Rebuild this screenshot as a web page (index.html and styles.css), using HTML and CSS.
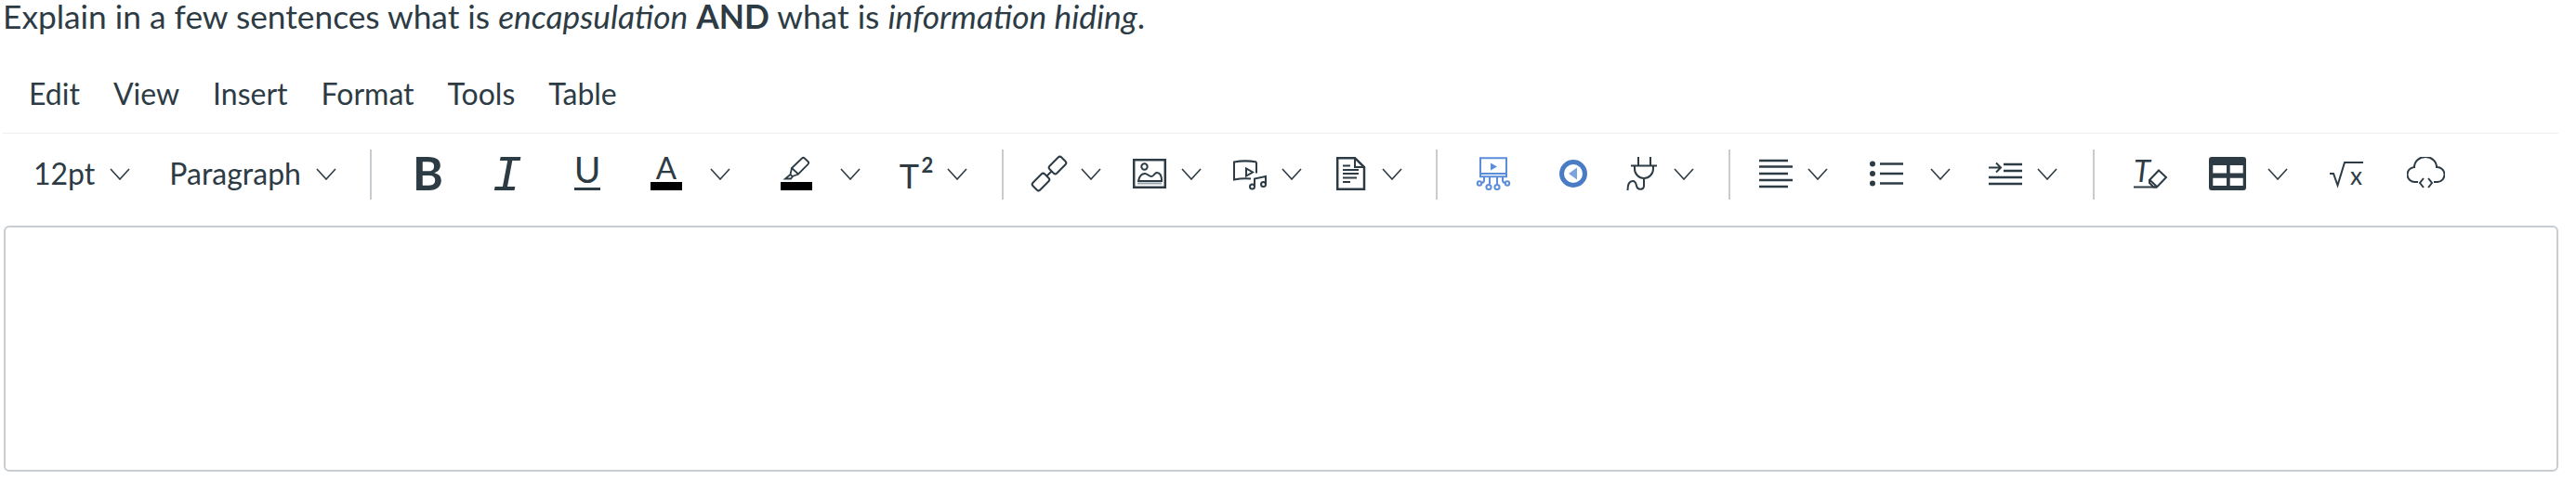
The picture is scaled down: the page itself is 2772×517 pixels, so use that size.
FILE: index.html
```html
<!DOCTYPE html>
<html lang="en">
<head>
<meta charset="utf-8">
<title>Essay question editor</title>
<link rel="stylesheet" href="styles.css">
</head>
<body>
<main class="page">
  <p class="question">Explain in a few sentences what is <em>encapsulation</em> <strong>AND</strong> what is <em>information hiding</em>.</p>

  <nav class="menubar">
    <span class="menu-item">Edit</span>
    <span class="menu-item">View</span>
    <span class="menu-item">Insert</span>
    <span class="menu-item">Format</span>
    <span class="menu-item">Tools</span>
    <span class="menu-item">Table</span>
  </nav>

  <div class="toolbar">
    <div class="group group-selects">
      <span class="select">12pt<svg class="chev" viewBox="0 0 22 13"><path d="M1 1l10 11L21 1"/></svg></span>
      <span class="select ml-42">Paragraph<svg class="chev" viewBox="0 0 22 13"><path d="M1 1l10 11L21 1"/></svg></span>
    </div>

    <div class="group pr-37">
      <svg class="icon ml-42" viewBox="0 0 36 36"><text class="g-bold" x="18.500" y="36">B</text></svg>
      <svg class="icon ml-50" viewBox="0 0 36 36"><text class="g-italic" x="17.500" y="36">I</text></svg>
      <svg class="icon ml-50" viewBox="0 0 36 36"><text class="g-under" x="18" y="28">U</text><rect class="solid" x="4" y="33" width="28" height="3"/></svg>
      <svg class="icon ml-49" viewBox="0 0 36 36"><text class="g-color" x="18" y="24">A</text><rect class="black" x="1" y="27" width="34" height="9"/></svg>
      <svg class="chev ml-29" viewBox="0 0 22 13"><path d="M1 1l10 11L21 1"/></svg>
      <svg class="icon ml-53" viewBox="0 0 36 36"><path class="thin" d="M24 1.500a2 2 0 0 1 2.800 0l3.700 3.500a2 2 0 0 1 0 2.800L20 18.500l-7-6.500zM13 12l-1.500 7 2 2 7-2.500M11.500 19L6 23.500h6l2-2.500"/><rect class="black" x="1" y="27" width="34" height="9"/></svg>
      <svg class="chev ml-29" viewBox="0 0 22 13"><path d="M1 1l10 11L21 1"/></svg>
      <svg class="icon ml-41" viewBox="0 0 36 36"><text class="g-sup" x="11.500" y="34">T</text><text class="g-two" x="31" y="17">2</text></svg>
      <svg class="chev ml-16" viewBox="0 0 22 13"><path d="M1 1l10 11L21 1"/></svg>
    </div>

    <div class="group">
      <svg class="icon ml-31" viewBox="0 0 36 36"><rect class="line" x="-9" y="-5.500" width="18" height="11" rx="2.500" transform="translate(27 9) rotate(-45)"/><rect class="line" x="-9" y="-5.500" width="18" height="11" rx="2.500" transform="translate(9 27) rotate(-45)"/><path class="line" d="M15 21l6-6"/></svg>
      <svg class="chev ml-16" viewBox="0 0 22 13"><path d="M1 1l10 11L21 1"/></svg>
      <svg class="icon ml-34" viewBox="0 0 36 36"><rect class="heavy" x="1.200" y="3.200" width="33.600" height="29.600"/><circle class="line" cx="12.500" cy="10.500" r="3.200"/><path class="line" d="M6 26c1-5 3-8 7-8 3 0 4 3 7 3s3-4 6-4c4 0 5 5 5 9z"/><path class="faint" d="M5 28.500h26"/></svg>
      <svg class="chev ml-16" viewBox="0 0 22 13"><path d="M1 1l10 11L21 1"/></svg>
      <svg class="icon ml-34" viewBox="0 0 36 36"><path class="line" d="M25 5.500C17 4 9 4 1 5.500v19c6-1.200 12-1.500 18-1M25 5.500v12"/><path class="line" d="M14 12.500v8l7-4zM23 32v-8.500L35 21v8.500"/><circle class="line" cx="20.500" cy="32" r="2.500"/><circle class="line" cx="32.500" cy="29.500" r="2.500"/></svg>
      <svg class="chev ml-16" viewBox="0 0 22 13"><path d="M1 1l10 11L21 1"/></svg>
      <svg class="icon ml-34" viewBox="0 0 36 36"><path class="heavy" d="M4.200 1.200h18.800l10 9.800v23.800H4.200z"/><path class="line" d="M23 1.200V11h10"/><path class="line" d="M10 9.500h8M10 14h17M10 18h17M10 22.500h15M10 27h8"/></svg>
      <svg class="chev ml-16" viewBox="0 0 22 13"><path d="M1 1l10 11L21 1"/></svg>
    </div>

    <div class="group pr-37">
      <svg class="icon ml-42" viewBox="0 0 36 36"><path class="blue" d="M4 1.200h28v20H4zM4 18h28"/><path class="blue-fill" d="M15 6.500l7 4-7 4z"/><path class="blue" d="M8 21v4a3 3 0 0 1-3 3M14 21v8M22 21v8M28 21v4a3 3 0 0 0 3 3"/><circle class="blue" cx="3" cy="28.500" r="2.200"/><circle class="blue" cx="13" cy="32.500" r="2.600"/><circle class="blue" cx="22" cy="32.500" r="2.600"/><circle class="blue" cx="33" cy="28.500" r="2.200"/></svg>
      <svg class="icon ml-50 soft" viewBox="0 0 36 36"><circle class="ring" cx="18" cy="18" r="12.500"/><path class="ring-arrow" d="M22 11.500v13L13 18z"/></svg>
      <svg class="icon ml-38" viewBox="0 0 36 36"><path class="line" d="M14 0v9M27 0v9M6 9.500h28M10 9.500V13a10 10 0 0 0 20 0V9.500M20 23v8c0 5-7 5-8 0-.8-4-2-5-4-5-4 0-5.500 4-5.500 10"/></svg>
      <svg class="chev ml-16" viewBox="0 0 22 13"><path d="M1 1l10 11L21 1"/></svg>
    </div>

    <div class="group pr-38">
      <svg class="icon ml-31" viewBox="0 0 36 36"><path class="bar" d="M0 4h31M0 10.500h36M0 18h31M0 25h36M0 32h31"/></svg>
      <svg class="chev ml-16" viewBox="0 0 22 13"><path d="M1 1l10 11L21 1"/></svg>
      <svg class="icon ml-45" viewBox="0 0 36 36"><circle class="solid" cx="3" cy="7.500" r="3"/><circle class="solid" cx="3" cy="18" r="3"/><circle class="solid" cx="3" cy="28.500" r="3"/><path class="bar" d="M11 7.500h25M11 18h25M11 28.500h25"/></svg>
      <svg class="chev ml-29" viewBox="0 0 22 13"><path d="M1 1l10 11L21 1"/></svg>
      <svg class="icon ml-41" viewBox="0 0 36 36"><path class="line" d="M0 11.500h12M8 6.500l5 5-5 5"/><path class="bar" d="M16 8h20M16 15h20M0 22h36M0 29h36"/></svg>
      <svg class="chev ml-16" viewBox="0 0 22 13"><path d="M1 1l10 11L21 1"/></svg>
    </div>

    <div class="group">
      <svg class="icon ml-42" viewBox="0 0 36 36"><text class="g-clear" x="0" y="27">T</text><path class="line" d="M0 32.500h25"/><path class="line" d="M27 14.500l8 7.500-10 10.500h-3.500l-4.500-4.500v-3z"/><path class="line" d="M17.500 25l8 7.500"/></svg>
      <svg class="icon-table ml-45" viewBox="0 0 40 36"><rect class="solid" width="40" height="36" rx="3"/><path class="cell" d="M4.300 9h14.700v8.500H4.300zM22.700 9h14v8.500h-14zM4.300 22.700h14.700V31H4.300zM22.700 22.700h14V31h-14z"/></svg>
      <svg class="chev ml-23" viewBox="0 0 22 13"><path d="M1 1l10 11L21 1"/></svg>
      <svg class="icon ml-45" viewBox="0 0 36 36"><path class="line" d="M0 18h4l4.500 12.500L16 6h20"/><text class="g-x" x="28.500" y="30">x</text></svg>
      <svg class="icon-cloud ml-47" viewBox="0 0 41 36"><path class="line" d="M12 27H9a8 8 0 0 1-1-16A12 11 0 0 1 32 11a8 8 0 0 1 1 16h-4M18 23l-4 5 4 5M23 23l4 5-4 5"/></svg>
    </div>
  </div>

  <div class="editor"></div>
</main>
</body>
</html>
```
FILE: styles.css
```css
* { box-sizing: border-box; }

html, body {
  margin: 0;
  padding: 0;
  background: #fff;
}

.page {
  width: 2772px;
  height: 517px;
  padding: 0 19px 9px 3px;
  font-family: "Lato", "Liberation Sans", sans-serif;
  color: #2d3b45;
}

.question {
  margin: 0;
  font-size: 35.3px;
  line-height: 36px;
  white-space: nowrap;
}

.question strong { font-weight: 700; }

.menubar {
  display: flex;
  gap: 36px;
  margin-top: 45px;
  padding: 0 0 22px 28px;
  font-size: 32px;
  line-height: 40px;
  border-bottom: 1px solid #eeeeee;
}

.toolbar {
  display: flex;
  margin-top: 17px;
}

.group {
  display: flex;
  align-items: center;
  height: 54px;
  padding-bottom: 2px;
  padding-right: 36px;
  border-right: 2px solid #c7cdd1;
}

.group:last-child { border-right: 0; }

.group-selects { padding-left: 33px; }
.pr-37 { padding-right: 37px; }
.pr-38 { padding-right: 38px; }

.select {
  display: flex;
  align-items: center;
  gap: 16px;
  font-size: 32px;
  line-height: 40px;
}

.icon { width: 36px; height: 36px; flex: none; overflow: visible; }
.icon-table { width: 40px; height: 36px; flex: none; }
.icon-cloud { width: 41px; height: 36px; flex: none; }
.soft { filter: blur(0.6px); }

.chev {
  width: 22px;
  height: 13px;
  flex: none;
  fill: none;
  stroke: #2d3b45;
  stroke-width: 1.6;
}

.line, .thin, .heavy, .bar, .faint { fill: none; stroke: #2d3b45; }
.line { stroke-width: 2; }
.thin { stroke-width: 1.8; }
.heavy { stroke-width: 2.5; }
.bar { stroke-width: 2.4; }
.faint { stroke: #9aa3aa; stroke-width: 2; }
.solid { fill: #2d3b45; }
.black { fill: #000; }
.cell { fill: #fff; }

.blue { fill: none; stroke: #5b8ddb; stroke-width: 2; }
.blue-fill { fill: #5b8ddb; }
.ring { fill: #fff; stroke: #4a7cc6; stroke-width: 5; }
.ring-arrow { fill: #7da3dc; }

text { fill: #2d3b45; text-anchor: middle; font-family: "Lato", sans-serif; }
.g-bold { font-size: 50px; font-weight: 700; }
.g-italic { font-family: "Liberation Mono", monospace; font-style: italic; font-size: 54px; }
.g-under { font-size: 39px; font-weight: 400; }
.g-color { font-size: 33px; font-weight: 400; }
.g-sup { font-size: 36px; font-weight: 400; }
.g-two { font-size: 22px; font-weight: 700; }
.g-clear { font-size: 33px; font-style: italic; font-weight: 400; text-anchor: start; }
.g-x { font-size: 26px; font-weight: 400; }

.ml-16 { margin-left: 16px; }
.ml-23 { margin-left: 23px; }
.ml-29 { margin-left: 29px; }
.ml-31 { margin-left: 31px; }
.ml-34 { margin-left: 34px; }
.ml-38 { margin-left: 38px; }
.ml-41 { margin-left: 41px; }
.ml-42 { margin-left: 42px; }
.ml-45 { margin-left: 45px; }
.ml-47 { margin-left: 47px; }
.ml-49 { margin-left: 49px; }
.ml-50 { margin-left: 50px; }
.ml-53 { margin-left: 53px; }

.editor {
  width: 2749px;
  height: 265px;
  margin: 28px 0 0 1px;
  border: 2px solid #c7cdd1;
  border-radius: 6px;
  background: #fff;
}
```
